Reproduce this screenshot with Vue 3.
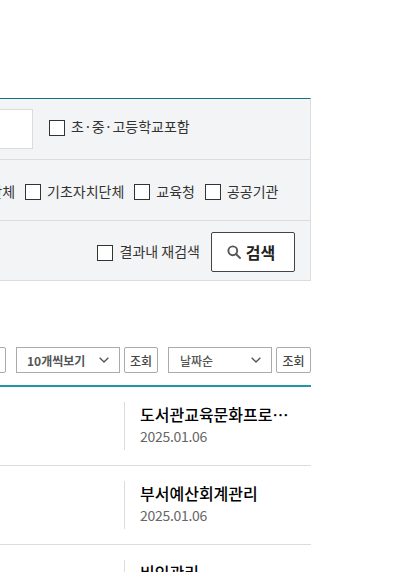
<script setup>
const rows = [
  { title: '도서관교육문화프로그램운영', date: '2025.01.06' },
  { title: '부서예산회계관리', date: '2025.01.06' },
  { title: '비인관리', date: '2025.01.06' }
]
</script>

<template>
  <div class="page">
    <section class="panel">
      <div class="row r1">
        <div class="field"></div>
        <label class="check"><span class="box"></span>초·중·고등학교포함</label>
      </div>
      <div class="row r2">
        <label class="check"><span class="box"></span>광역자치단체</label>
        <label class="check"><span class="box"></span>기초자치단체</label>
        <label class="check"><span class="box"></span>교육청</label>
        <label class="check"><span class="box"></span>공공기관</label>
      </div>
      <div class="row r3">
        <label class="check"><span class="box"></span>결과내 재검색</label>
        <button class="search">
          <svg width="14" height="14" viewBox="0 0 14 14" fill="none" stroke="#555" stroke-width="1.9">
            <circle cx="5.8" cy="5.8" r="4.4" />
            <path d="M9 9 13 13" stroke-linecap="round" />
          </svg>
          <b>검색</b>
        </button>
      </div>
    </section>

    <div class="toolbar">
      <div class="select stub"></div>
      <div class="select s1"><strong>10개씩보기</strong><svg class="chev" width="10" height="6" viewBox="0 0 10 6" fill="none" stroke="#555" stroke-width="1.4"><path d="M.7.7 5 5 9.3.7" /></svg></div>
      <button class="go">조회</button>
      <div class="select s2"><span>날짜순</span><svg class="chev" width="10" height="6" viewBox="0 0 10 6" fill="none" stroke="#555" stroke-width="1.4"><path d="M.7.7 5 5 9.3.7" /></svg></div>
      <button class="go last">조회</button>
    </div>

    <ul class="list">
      <li v-for="r in rows" :key="r.title" class="item">
        <div class="cell">
          <div class="title">{{ r.title }}</div>
          <div class="date">{{ r.date }}</div>
        </div>
      </li>
    </ul>
  </div>
</template>

<style>
html, body { margin: 0; overflow: hidden; background: #fff; }
</style>

<style scoped>
.page {
  width: 311px;
  height: 572px;
  overflow: hidden;
  padding-top: 98px;
  box-sizing: border-box;
  font-family: "Noto Sans CJK KR", "Noto Sans", sans-serif;
  color: #333;
}
.panel {
  border-top: 1px solid #0f7286;
  border-right: 1px solid #dcdcdc;
  border-bottom: 1px solid #dcdcdc;
  background: #f3f4f6;
}
.row {
  display: flex;
  align-items: center;
  justify-content: flex-end;
  font-size: 14px;
  white-space: nowrap;
}
.r1 { height: 54px; padding-bottom: 6px; justify-content: flex-start; border-bottom: 1px solid #dcdcdc; }
.r2 { height: 58px; padding-top: 2px; padding-right: 31.5px; gap: 10px; border-bottom: 1px solid #dcdcdc; }
.r3 { height: 59px; padding-right: 15px; gap: 11px; }
.field {
  width: 32px;
  height: 38px;
  margin-top: 6px;
  margin-right: 16px;
  background: #fff;
  border: 1px solid #dcdcdc;
  border-left: 0;
}
.check { display: flex; align-items: center; gap: 6px; line-height: 20px; flex: none; }
.r3 .check { gap: 7px; }
.box {
  width: 14px;
  height: 14px;
  background: #fff;
  border: 1px solid #333;
  flex: none;
}
.r1 .box, .r3 .box { margin-top: 4px; }
.r2 .box { margin-top: 2px; }
.search {
  width: 84px;
  height: 40px;
  margin-top: 2px;
  display: flex;
  align-items: center;
  justify-content: center;
  gap: 5px;
  padding: 0 4px 0 0;
  background: #fff;
  border: 1px solid #444;
  border-radius: 2px;
  font: inherit;
  font-size: 16px;
  color: #222;
}
.toolbar {
  display: flex;
  justify-content: flex-end;
  align-items: center;
  gap: 4px;
  margin-top: 66px;
  height: 26px;
}
.select {
  box-sizing: border-box;
  height: 26px;
  display: flex;
  align-items: center;
  justify-content: space-between;
  background: #fff;
  border: 1px solid #aaa;
  font-size: 12px;
  font-weight: 500;
  color: #555;
  flex: none;
}
.stub { width: 10px; margin-left: -4px; margin-right: 6px; border-radius: 2px; }
.s1 { width: 104px; padding: 0 10px 0 10px; }
.s2 { width: 104px; margin-left: 6px; padding: 0 10px 0 11px; }
.go {
  box-sizing: border-box;
  width: 34px;
  height: 26px;
  padding: 0;
  background: #fff;
  border: 1px solid #aaa;
  border-radius: 2px;
  font: inherit;
  font-size: 12px;
  font-weight: 500;
  color: #444;
  flex: none;
}
.last { width: 35px; }
.list {
  list-style: none;
  margin: 12px 0 0;
  padding: 0;
  border-top: 2px solid #2096aa;
}
.item {
  height: 78px;
  border-bottom: 1px solid #dcdcdc;
  display: flex;
  align-items: center;
  justify-content: flex-end;
}
.cell {
  box-sizing: border-box;
  width: 187px;
  height: 48px;
  padding-left: 15px;
  border-left: 1px solid #dcdcdc;
}
.title {
  font-size: 16px;
  font-weight: 500;
  line-height: 24px;
  color: #000;
  white-space: nowrap;
  overflow: hidden;
  text-overflow: ellipsis;
  padding-right: 22px;
}
.date { font-size: 14px; line-height: 20px; color: #666; letter-spacing: -0.3px; }
</style>
